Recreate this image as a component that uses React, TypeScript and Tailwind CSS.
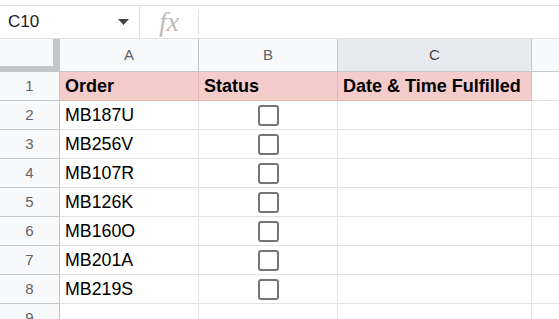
const orders = ["MB187U", "MB256V", "MB107R", "MB126K", "MB160O", "MB201A", "MB219S"];

const font = { fontFamily: '"Liberation Sans", Arial, sans-serif' };

function Checkbox() {
  return <div className="w-[21px] h-[21px] rounded-[3px] border-[2.5px] border-[#757575] bg-white" />;
}

export default function App() {
  return (
    <div className="w-[559px] h-[319px] overflow-hidden bg-white text-[#000]" style={font}>
      <div className="h-[6px] border-b border-[#e3e3e3]" />
      {/* formula bar */}
      <div className="h-[33px] flex items-center border-b border-[#e0e0e0]">
        <div className="w-[140px] h-full flex items-center pl-[8px] pr-[10px] border-r border-[#e0e0e0] my-[4px]">
          <span className="text-[17px] text-[#202124] flex-1">C10</span>
          <svg width="11" height="6" viewBox="0 0 11 6">
            <path d="M0 0 L11 0 L5.5 6 Z" fill="#444" />
          </svg>
        </div>
        <div className="w-[59px] h-[24px] flex items-center justify-center border-r border-[#e0e0e0]">
          <span className="text-[28px] italic text-[#bdbdbd] leading-none" style={{ fontFamily: '"Liberation Serif", serif' }}>
            fx
          </span>
        </div>
      </div>
      {/* column headers */}
      <div className="h-[33px] flex text-[15px] text-[#5f6368]">
        <div className="w-[60px] h-full bg-[#f8f9fa] border-r-[7px] border-b-[6px] border-[#c4c6c8]" />
        <div className="w-[139px] h-full bg-[#f8f9fa] border-r border-b border-[#c4c6c8] flex items-center justify-center">A</div>
        <div className="w-[139px] h-full bg-[#f8f9fa] border-r border-b border-[#c4c6c8] flex items-center justify-center">B</div>
        <div className="w-[194px] h-full bg-[#e8eaed] border-r border-b border-[#c4c6c8] flex items-center justify-center text-[#444]">C</div>
        <div className="flex-1 h-full bg-[#f8f9fa] border-b border-[#c4c6c8]" />
      </div>
      {/* row 1 */}
      <div className="h-[29px] flex text-[18px] font-bold">
        <div className="w-[60px] h-full bg-[#f8f9fa] border-r border-b border-[#c4c6c8] flex items-center justify-center text-[15px] font-normal text-[#5f6368]">1</div>
        <div className="w-[139px] h-full bg-[#f4cccc] border-r border-b border-[#e6b8b8] flex items-center pl-[5px]">Order</div>
        <div className="w-[139px] h-full bg-[#f4cccc] border-r border-b border-[#e6b8b8] flex items-center pl-[5px]">Status</div>
        <div className="w-[194px] h-full bg-[#f4cccc] border-r border-b border-[#e6b8b8] flex items-center pl-[5px]">Date &amp; Time Fulfilled</div>
        <div className="flex-1 h-full border-b border-[#e2e2e2]" />
      </div>
      {orders.map((o, i) => (
        <div key={o} className="h-[29px] flex text-[17.8px]">
          <div className="w-[60px] h-full bg-[#f8f9fa] border-r border-b border-[#c4c6c8] flex items-center justify-center text-[15px] text-[#5f6368]">
            {i + 2}
          </div>
          <div className="w-[139px] h-full border-r border-b border-[#e2e2e2] flex items-center pl-[5px]">{o}</div>
          <div className="w-[139px] h-full border-r border-b border-[#e2e2e2] flex items-center justify-center">
            <Checkbox />
          </div>
          <div className="w-[194px] h-full border-r border-b border-[#e2e2e2]" />
          <div className="flex-1 h-full border-b border-[#e2e2e2]" />
        </div>
      ))}
      <div className="h-[29px] flex text-[17.7px]">
        <div className="w-[60px] h-full bg-[#f8f9fa] border-r border-[#c4c6c8] flex items-center justify-center text-[15px] text-[#5f6368]">9</div>
        <div className="w-[139px] h-full border-r border-[#e2e2e2]" />
        <div className="w-[139px] h-full border-r border-[#e2e2e2]" />
        <div className="w-[194px] h-full border-r border-[#e2e2e2]" />
        <div className="flex-1 h-full" />
      </div>
    </div>
  );
}
